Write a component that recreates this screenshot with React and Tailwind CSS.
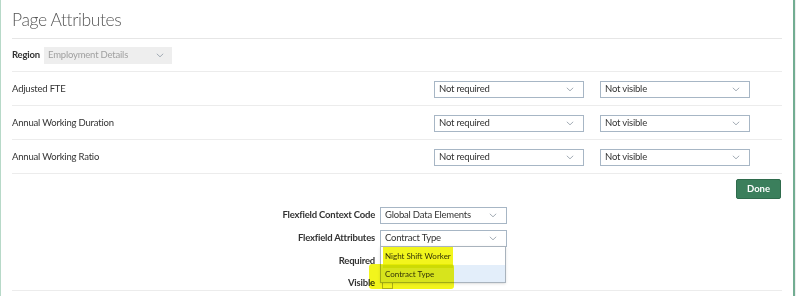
const font = { fontFamily: 'Lato, "Open Sans", Arial, sans-serif' };

function Chevron({ className = "" }) {
  return (
    <svg width="8" height="5" viewBox="0 0 8 5" className={className}>
      <path d="M0.8 0.8 L4 3.8 L7.2 0.8" fill="none" stroke="#9aa4ae" strokeWidth="0.9" />
    </svg>
  );
}

function Select({ value, className = "" }) {
  return (
    <div
      className={`flex items-center justify-between h-[17px] border border-[#a7b6c5] bg-white pl-[4px] pr-[9px] text-[9.5px] tracking-[-0.2px] text-[#333] ${className}`}
    >
      <span>{value}</span>
      <Chevron />
    </div>
  );
}

function AttrRow({ label }) {
  return (
    <div className="flex items-center h-[34px] border-b border-[#ececec] pt-px">
      <span className="text-[9.5px] tracking-[-0.2px] text-[#333] w-[422px]">{label}</span>
      <Select value="Not required" className="w-[150px]" />
      <Select value="Not visible" className="w-[150px] ml-[16px]" />
    </div>
  );
}

export default function App() {
  return (
    <div className="w-[797px] h-[296px] overflow-hidden bg-white flex" style={font}>
      <div className="relative w-[795px] h-full border-l border-[#b7d9c8] border-r-2 border-r-[#72ad92] pl-[11px] pr-[11px]">
        <div className="h-[39px] border-b border-[#e6e6e6] flex items-start pt-[11px]">
          <h1 className="text-[17.5px] font-light text-[#555] leading-none tracking-[-0.4px]">Page Attributes</h1>
        </div>
        <div className="h-[33px] border-b border-[#ececec] flex items-center pt-px">
          <span className="text-[9.5px] tracking-[-0.2px] font-bold text-[#333] w-[32px]">Region</span>
          <div className="flex items-center justify-between w-[128px] h-[17px] bg-[#eeeeee] pl-[4px] pr-[8px] text-[9.5px] tracking-[-0.2px] text-[#a0a0a0]">
            <span>Employment Details</span>
            <Chevron />
          </div>
        </div>
        <AttrRow label="Adjusted FTE" />
        <AttrRow label="Annual Working Duration" />
        <AttrRow label="Annual Working Ratio" />

        <div className="flex justify-end pt-[5px] pr-px">
          <button className="w-[45px] h-[20px] rounded-[2px] bg-[#3b7f5c] border border-[#2f6b4c] text-white text-[9.5px] font-bold">
            Done
          </button>
        </div>

        <div className="mt-[8px] flex flex-col text-[9.5px] tracking-[-0.2px] text-[#333]">
          <div className="flex items-center h-[17px]">
            <span className="w-[368px] text-right font-bold pr-[5px]">Flexfield Context Code</span>
            <Select value="Global Data Elements" className="w-[127px]" />
          </div>
          <div className="flex items-center h-[17px] mt-[6px]">
            <span className="w-[368px] text-right font-bold pr-[5px]">Flexfield Attributes</span>
            <Select value="Contract Type" className="w-[127px]" />
          </div>
          <div className="flex items-center h-[22px] mt-[3px]">
            <span className="w-[368px] text-right font-bold pr-[5px]">Required</span>
          </div>
          <div className="flex items-center h-[22px]">
            <span className="w-[368px] text-right font-bold pr-[5px]">Visible</span>
          </div>
        </div>
        <div className="absolute left-[11px] right-[11px] top-[290px] border-b border-[#ececec]"></div>

        <div className="absolute left-[381px] top-[278px] w-[11px] h-[11px] border border-[#b8b8b8] bg-white"></div>
        <div className="absolute left-[379px] top-[246px] w-[126px] h-[37px] bg-white border border-[#a9b3bd] shadow-sm text-[8px] text-[#333]">
          <div className="h-[18px] flex items-center pl-[4px]">Night Shift Worker</div>
          <div className="h-[17px] flex items-center pl-[4px] bg-[#e3eefa]">Contract Type</div>
        </div>
        <div className="absolute left-[382px] top-[247px] w-[70px] h-[21px] bg-[#f2f51c] mix-blend-multiply"></div>
        <div className="absolute left-[368px] top-[264px] w-[85px] h-[25px] bg-[#f2f51c] rounded-[3px] mix-blend-multiply"></div>
      </div>
      <div className="flex-1 bg-white border-l border-[#eee]"></div>
    </div>
  );
}
